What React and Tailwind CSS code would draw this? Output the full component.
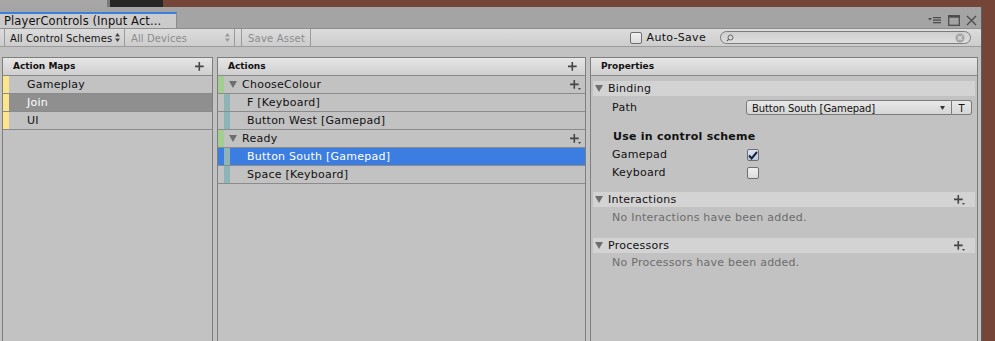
import React from 'react';

const FONT = "font-['DejaVu_Sans','Verdana',sans-serif]";

function Foldout() {
  return (
    <svg width="8" height="7" viewBox="0 0 8 7" className="shrink-0">
      <polygon points="0,0 8,0 4,7" fill="#6e6e6e" />
    </svg>
  );
}

function PlusIcon({ more }) {
  return (
    <svg width="11" height="10" viewBox="0 0 11 10" className="shrink-0">
      <path d="M3.5 0h1.6v3.6h3.6v1.6H5.1v3.6H3.5V5.2H0V3.6h3.5z" fill="#454545" />
      {more && <path d="M8 8h3l-1.5 2z" fill="#454545" />}
    </svg>
  );
}

function UpDown({ color }) {
  return (
    <svg width="5" height="9" viewBox="0 0 5 9" className="shrink-0">
      <polygon points="0,3.5 5,3.5 2.5,0" fill={color} />
      <polygon points="0,5.5 5,5.5 2.5,9" fill={color} />
    </svg>
  );
}

function PanelHeader({ title, plus = true }) {
  return (
    <div className="h-[18px] shrink-0 flex items-center justify-between pl-[10px] pr-[6px] border-b border-[#8a8a8a] bg-gradient-to-b from-[#e6e6e6] to-[#cfcfcf]">
      <span className="pt-[1px] text-[9px] font-bold text-[#111]">{title}</span>
      {plus && <PlusIcon />}
    </div>
  );
}

function MapRow({ name, selected }) {
  return (
    <div className={`h-[18px] shrink-0 flex items-center border-b border-[#8b8b8b] ${selected ? 'bg-[#8f8f8f]' : ''}`}>
      <div className="w-[6px] self-stretch bg-[#fde58b]" />
      <span className={`ml-[18px] pt-[1px] text-[11px] tracking-[0.25px] ${selected ? 'text-white' : 'text-[#111]'}`}>{name}</span>
    </div>
  );
}

function ActionRow({ name }) {
  return (
    <div className="h-[18px] shrink-0 flex items-center border-b border-[#8b8b8b] pr-[4px]">
      <div className="w-[6px] self-stretch bg-[#a2ce92]" />
      <div className="ml-[5px]"><Foldout /></div>
      <span className="ml-[5px] pt-[1px] flex-1 text-[11px] tracking-[0.25px] text-[#111]">{name}</span>
      <PlusIcon more />
    </div>
  );
}

function BindingRow({ name, selected }) {
  return (
    <div className={`h-[18px] shrink-0 flex items-center border-b border-[#8b8b8b] ${selected ? 'bg-[#3c7de2]' : ''}`}>
      <div className="w-[6px] self-stretch" />
      <div className="w-[6px] self-stretch bg-[#8db5b7]" />
      <span className={`ml-[17px] pt-[1px] text-[11px] tracking-[0.25px] ${selected ? 'text-white' : 'text-[#111]'}`}>{name}</span>
    </div>
  );
}

function SectionBar({ title, plus }) {
  return (
    <div className="mx-[2px] h-[15px] shrink-0 flex items-center bg-[#d3d3d3] pl-[2px] pr-[10px]">
      <Foldout />
      <span className="ml-[5px] pt-[1px] flex-1 text-[11px] tracking-[0.25px] text-[#111]">{title}</span>
      {plus && <PlusIcon more />}
    </div>
  );
}

function Checkbox({ checked }) {
  return (
    <div className={`w-[12px] h-[12px] rounded-[2px] border border-[#6f6f6f] flex items-center justify-center ${checked ? 'bg-gradient-to-b from-[#dbe6f5] to-[#b9cbe6]' : 'bg-gradient-to-b from-[#f0f0f0] to-[#dcdcdc]'}`}>
      {checked && (
        <svg width="10" height="9" viewBox="0 0 10 9">
          <path d="M1 4.5l2.6 3L9 1" stroke="#1b2430" strokeWidth="2" fill="none" />
        </svg>
      )}
    </div>
  );
}

export default function App() {
  return (
    <div className={`w-[995px] h-[341px] overflow-hidden flex flex-col bg-[#754538] ${FONT}`}>
      {/* strip of the windows behind */}
      <div className="h-[7px] shrink-0 flex">
        <div className="w-[107px] bg-[#a7a7a7]" />
        <div className="w-[3px] bg-[#7a7a7a]" />
        <div className="w-[53px] bg-[#262626]" />
        <div className="flex-1" />
      </div>

      <div className="flex-1 flex min-h-0">
        <div className="w-[982px] flex flex-col border-r border-[#5e5e5e] bg-[#c2c2c2]">
          {/* title bar */}
          <div className="h-[21px] shrink-0 flex items-end bg-[#a4a4a4]">
            <div className="w-[177px] h-[16px] flex items-center pl-[4px] pt-[2px] bg-[#cbcbcb] border-t-2 border-[#3d7edc] border-r border-r-[#8c8c8c]">
              <span className="text-[11.5px] tracking-[0.1px] text-[#111] leading-none">PlayerControls (Input Act...</span>
            </div>
            <div className="ml-auto self-center mt-[5px] mr-[4px] flex items-center gap-[6px]">
              <svg width="14" height="8" viewBox="0 0 14 8">
                <polygon points="0,2 4,2 2,4.5" fill="#4d4d4d" />
                <rect x="5" y="1" width="8" height="1.3" fill="#4d4d4d" />
                <rect x="5" y="3.5" width="8" height="1.3" fill="#4d4d4d" />
                <rect x="5" y="6" width="8" height="1.3" fill="#4d4d4d" />
              </svg>
              <svg width="12" height="11" viewBox="0 0 12 11">
                <rect x="0.7" y="0.7" width="10.6" height="9.6" fill="none" stroke="#4d4d4d" strokeWidth="1.3" />
                <rect x="0.7" y="0.7" width="10.6" height="2" fill="#4d4d4d" />
              </svg>
              <svg width="11" height="11" viewBox="0 0 11 11">
                <path d="M1 1l9 9M10 1l-9 9" stroke="#4d4d4d" strokeWidth="1.4" />
              </svg>
            </div>
          </div>

          {/* toolbar */}
          <div className="h-[19px] shrink-0 flex items-center bg-gradient-to-b from-[#dcdcdc] to-[#cdcdcd] border-t border-[#8e8e8e] border-b border-b-[#9c9c9c]">
            <div className="ml-[4px] h-full w-[121px] flex items-center border-l border-[#9a9a9a] border-r pl-[5px] pr-[4px]">
              <span className="flex-1 pt-[1px] text-[10px] tracking-[0.1px] text-[#111]">All Control Schemes</span>
              <UpDown color="#444" />
            </div>
            <div className="h-full w-[110px] flex items-center border-r border-[#9a9a9a] pl-[6px] pr-[4px]">
              <span className="flex-1 pt-[1px] text-[10px] tracking-[0.1px] text-[#8c8c8c]">All Devices</span>
              <UpDown color="#9a9a9a" />
            </div>
            <div className="ml-[6px] h-full w-[70px] flex items-center border-l border-r border-[#9a9a9a] pl-[6px]">
              <span className="pt-[1px] text-[10px] tracking-[0.2px] text-[#8c8c8c]">Save Asset</span>
            </div>
            <div className="ml-auto flex items-center">
              <Checkbox />
              <span className="ml-[5px] pt-[1px] text-[11px] tracking-[0.3px] text-[#111]">Auto-Save</span>
            </div>
            <div className="ml-[14px] mr-[10px] w-[251px] h-[13px] rounded-full border border-[#7c7c7c] bg-gradient-to-b from-[#cfcfcf] to-[#dedede] flex items-center px-[5px]">
              <svg width="8" height="8" viewBox="0 0 8 8">
                <circle cx="4.5" cy="3.5" r="2.5" stroke="#666" strokeWidth="1" fill="none" />
                <path d="M2.8 5.2L0.8 7.2" stroke="#666" strokeWidth="1.2" />
              </svg>
              <svg width="10" height="10" viewBox="0 0 10 10" className="ml-auto">
                <circle cx="5" cy="5" r="4.5" fill="#a4a4a4" />
                <path d="M3 3l4 4M7 3l-4 4" stroke="#dcdcdc" strokeWidth="1.2" />
              </svg>
            </div>
          </div>

          {/* panels */}
          <div className="flex-1 min-h-0 flex gap-[4px] pt-[10px] pl-[2px]">
            <div className="w-[211px] h-[300px] shrink-0 flex flex-col border border-[#7e7e7e]">
              <PanelHeader title="Action Maps" />
              <MapRow name="Gameplay" />
              <MapRow name="Join" selected />
              <MapRow name="UI" />
            </div>

            <div className="w-[369px] h-[300px] shrink-0 flex flex-col border border-[#7e7e7e]">
              <PanelHeader title="Actions" />
              <ActionRow name="ChooseColour" />
              <BindingRow name="F [Keyboard]" />
              <BindingRow name="Button West [Gamepad]" />
              <ActionRow name="Ready" />
              <BindingRow name="Button South [Gamepad]" selected />
              <BindingRow name="Space [Keyboard]" />
            </div>

            <div className="w-[388px] h-[300px] shrink-0 flex flex-col border border-[#7e7e7e]">
              <PanelHeader title="Properties" plus={false} />
              <div className="mt-[5px]"><SectionBar title="Binding" /></div>
              <div className="mt-[4px] h-[15px] flex items-center pl-[21px]">
                <span className="w-[134px] pt-[1px] text-[11px] tracking-[0.25px] text-[#111]">Path</span>
                <div className="w-[206px] h-[15px] flex items-center rounded-l-[3px] border border-[#7a7a7a] bg-gradient-to-b from-[#e8e8e8] to-[#d6d6d6] pl-[5px] pr-[6px]">
                  <span className="flex-1 pt-[1px] text-[10px] tracking-[-0.1px] text-[#111]">Button South [Gamepad]</span>
                  <svg width="5" height="4" viewBox="0 0 5 4"><polygon points="0,0 5,0 2.5,4" fill="#333" /></svg>
                </div>
                <div className="w-[20px] h-[15px] flex items-center justify-center rounded-r-[3px] border border-l-0 border-[#7a7a7a] bg-gradient-to-b from-[#e8e8e8] to-[#d6d6d6]">
                  <span className="pt-[1px] text-[10px] text-[#111]">T</span>
                </div>
              </div>
              <div className="mt-[13px] h-[18px] flex items-center pl-[22px]">
                <span className="pt-[1px] text-[11px] font-bold tracking-[0.25px] text-[#111]">Use in control scheme</span>
              </div>
              <div className="h-[18px] flex items-center pl-[21px]">
                <span className="w-[135px] pt-[1px] text-[11px] tracking-[0.25px] text-[#111]">Gamepad</span>
                <Checkbox checked />
              </div>
              <div className="h-[18px] flex items-center pl-[21px]">
                <span className="w-[135px] pt-[1px] text-[11px] tracking-[0.25px] text-[#111]">Keyboard</span>
                <Checkbox />
              </div>
              <div className="mt-[10px]"><SectionBar title="Interactions" plus /></div>
              <div className="mt-[2px] h-[18px] flex items-center pl-[21px]">
                <span className="pt-[1px] text-[11px] tracking-[0.25px] text-[#6c6c6c]">No Interactions have been added.</span>
              </div>
              <div className="mt-[11px]"><SectionBar title="Processors" plus /></div>
              <div className="mt-[1px] h-[18px] flex items-center pl-[21px]">
                <span className="pt-[1px] text-[11px] tracking-[0.25px] text-[#6c6c6c]">No Processors have been added.</span>
              </div>
            </div>
          </div>
        </div>
        <div className="flex-1" />
      </div>
    </div>
  );
}
